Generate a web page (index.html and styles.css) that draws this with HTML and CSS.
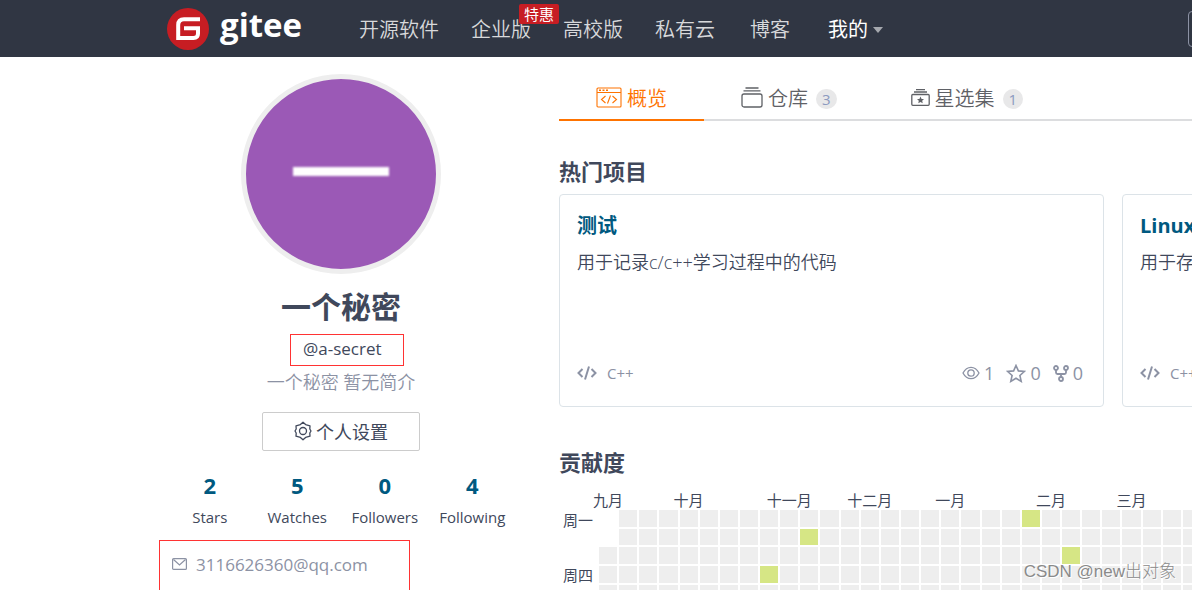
FILE: index.html
```html
<!DOCTYPE html>
<html lang="zh-CN">
<head>
    <meta charset="UTF-8">
    <meta name="viewport" content="width=device-width, initial-scale=1.0">
    <title>一个秘密 - Gitee</title>
    <link rel="stylesheet" href="styles.css">
</head>
<body>
    <header class="header">
        <a class="logo" href="#">
            <svg width="42" height="42" viewBox="0 0 42 42" aria-hidden="true">
                <circle cx="21" cy="21" r="21" fill="#c71d23"/>
                <path d="M33 11.200H17Q11.200 11.200 11.200 17V30H26.500Q31 30 31 25.500V20.200H17" fill="none" stroke="#fff" stroke-width="4"/>
            </svg>
            <span>gitee</span>
        </a>
        <nav class="nav">
            <a href="#">开源软件</a>
            <a href="#">企业版<span class="promo">特惠</span></a>
            <a href="#">高校版</a>
            <a href="#">私有云</a>
            <a class="short" href="#">博客</a>
            <a class="short mine" href="#">我的<span class="caret"></span></a>
        </nav>
        <input class="search" type="search" aria-label="搜索">
    </header>

    <main class="page">
        <aside class="profile">
            <div class="avatar"><span class="dash"></span></div>
            <h1>一个秘密</h1>
            <div class="username">@a-secret</div>
            <p class="bio">一个秘密 暂无简介</p>
            <button class="settings" type="button">
                <svg width="18" height="20" viewBox="0 0 18 20" fill="none" stroke="currentColor" stroke-width="1.300" stroke-linejoin="round" aria-hidden="true">
                    <path d="M9 1.200L11.600 3.600L16 4.800L15.800 8L17 10L15.800 12L16 15.200L11.600 16.400L9 18.800L6.400 16.400L2 15.200L2.200 12L1 10L2.200 8L2 4.800L6.400 3.600Z"/>
                    <circle cx="9" cy="10" r="3.500"/>
                </svg>
                个人设置
            </button>
            <div class="stats">
                <a href="#"><b>2</b>Stars</a>
                <a href="#"><b>5</b>Watches</a>
                <a href="#"><b>0</b>Followers</a>
                <a href="#"><b>4</b>Following</a>
            </div>
            <div class="contact">
                <svg width="15" height="12" viewBox="0 0 15 12" fill="none" stroke="currentColor" stroke-width="1.200" aria-hidden="true">
                    <rect x="0.600" y="0.600" width="13.800" height="10.800" rx="1"/>
                    <path d="M1.500 1.500L7.500 7L13.500 1.500"/>
                </svg>
                <a href="#">3116626360@qq.com</a>
            </div>
        </aside>

        <section class="content">
            <nav class="tabs">
                <a class="active" href="#">
                    <svg width="26" height="21" viewBox="0 0 26 21" fill="none" stroke="currentColor" aria-hidden="true">
                        <rect x="1" y="1" width="24" height="19" rx="1" stroke-width="1.100"/>
                        <path d="M1 5.500H25M9.500 9L5.500 12.500L9.500 16M16.500 9L20.500 12.500L16.500 16M14.500 8.500L11.500 16.500" stroke-width="1.100"/>
                        <path d="M3 3.300H5M6.500 3.300H8.500M10 3.300H12" stroke-width="1.400"/>
                    </svg>
                    概览
                </a>
                <a href="#">
                    <svg width="22" height="21" viewBox="0 0 22 21" fill="none" stroke="currentColor" stroke-width="1.300" aria-hidden="true">
                        <path d="M4.500 1H17.500M2.500 3.800H19.500"/>
                        <rect x="1" y="7" width="20" height="13" rx="2"/>
                    </svg>
                    仓库 <span class="count">3</span>
                </a>
                <a href="#">
                    <svg width="19" height="17" viewBox="0 0 19 17" fill="none" stroke="currentColor" stroke-width="1.300" aria-hidden="true">
                        <path d="M5 0.700H14M3 3H16"/>
                        <rect x="0.800" y="5.500" width="17.400" height="10.800" rx="1"/>
                        <path d="M9.500 7.500L10.600 9.900L13 10.100L11.200 11.700L11.700 14.200L9.500 12.900L7.300 14.200L7.800 11.700L6 10.100L8.400 9.900Z" fill="currentColor" stroke="none"/>
                    </svg>
                    星选集 <span class="count">1</span>
                </a>
            </nav>

            <h2>热门项目</h2>
            <div class="projects">
                <article class="card">
                    <h3><a href="#">测试</a></h3>
                    <p>用于记录c/c++学习过程中的代码</p>
                    <div class="meta">
                        <svg width="20" height="14" viewBox="0 0 20 14" fill="none" stroke="currentColor" stroke-width="2" aria-hidden="true">
                            <path d="M5.500 3L1.500 7L5.500 11M14.500 3L18.500 7L14.500 11M12 0.500L8 13.500"/>
                        </svg>
                        <span class="lang">C++</span>
                        <span class="figure">
                            <svg width="18" height="14" viewBox="0 0 18 14" fill="none" stroke="currentColor" stroke-width="1.300" aria-hidden="true">
                                <path d="M1 7Q4 1.300 9 1.300T17 7Q14 12.700 9 12.700T1 7Z"/>
                                <circle cx="9" cy="7" r="3.200"/>
                            </svg>
                            1
                        </span>
                        <span class="figure">
                            <svg width="20" height="19" viewBox="0 0 20 19" fill="none" stroke="currentColor" stroke-width="1.600" aria-hidden="true">
                                <path d="M10 1.500L12.400 6.900L18.300 7.500L13.900 11.500L15.200 17.400L10 14.300L4.800 17.400L6.100 11.500L1.700 7.500L7.600 6.900Z"/>
                            </svg>
                            0
                        </span>
                        <span class="figure">
                            <svg width="16" height="17" viewBox="0 0 16 17" fill="none" stroke="currentColor" stroke-width="1.800" aria-hidden="true">
                                <circle cx="3" cy="3" r="2"/>
                                <circle cx="13" cy="3" r="2"/>
                                <circle cx="8" cy="14" r="2"/>
                                <path d="M3 5V7.500Q3 9 4.500 9H11.500Q13 9 13 7.500V5M8 9V12"/>
                            </svg>
                            0
                        </span>
                    </div>
                </article>
                <article class="card">
                    <h3><a href="#">Linux</a></h3>
                    <p>用于存</p>
                    <div class="meta">
                        <svg width="20" height="14" viewBox="0 0 20 14" fill="none" stroke="currentColor" stroke-width="2" aria-hidden="true">
                            <path d="M5.500 3L1.500 7L5.500 11M14.500 3L18.500 7L14.500 11M12 0.500L8 13.500"/>
                        </svg>
                        <span class="lang">C++</span>
                    </div>
                </article>
            </div>

            <h2 class="calendar-title">贡献度</h2>
            <div class="calendar">
                <div class="months" id="months"></div>
                <div class="days">
                    <span>周一</span>
                    <span>周四</span>
                </div>
                <div class="weeks" id="weeks"></div>
            </div>
        </section>
    </main>
    <div class="watermark">CSDN @new出对象</div>

    <script>
        const WEEKS = 53;
        const FIRST_DAY = 2; // the first week starts on Wednesday
        const months = [
            { name: '九月', week: 0 },
            { name: '十月', week: 4 },
            { name: '十一月', week: 9 },
            { name: '十二月', week: 13 },
            { name: '一月', week: 17 },
            { name: '二月', week: 22 },
            { name: '三月', week: 26 }
        ];
        // week-day pairs that have contributions
        const active = ['8-3', '10-1', '21-0', '23-2'];

        months.forEach(month => {
            const label = document.createElement('span');
            label.textContent = month.name;
            label.style.gridColumn = month.week + 1;
            document.getElementById('months').appendChild(label);
        });

        const weeks = document.getElementById('weeks');
        for (let week = 0; week < WEEKS; week++) {
            for (let day = 0; day < 7; day++) {
                const box = document.createElement('i');
                if (week === 0 && day < FIRST_DAY) {
                    box.className = 'blank';
                } else if (active.includes(`${week}-${day}`)) {
                    box.className = 'some';
                }
                weeks.appendChild(box);
            }
        }
    </script>
</body>
</html>
```
FILE: styles.css
```css
* {
    box-sizing: border-box;
}
body {
    margin: 0;
    height: 100vh;
    position: relative;
    overflow: hidden;
    background-color: #fff;
    color: #40485b;
    font-family: "Open Sans", "Noto Sans CJK SC", sans-serif;
    font-size: 18px;
}
a {
    color: inherit;
    text-decoration: none;
}
svg {
    flex: none;
}
h1, h2, h3, p {
    margin: 0;
}

/* Header */
.header {
    display: flex;
    align-items: center;
    height: 57px;
    padding-left: 167px;
    background-color: #303643;
    white-space: nowrap;
}
.logo {
    display: flex;
    align-items: center;
    gap: 11px;
    color: #fff;
    font-size: 33px;
    font-weight: bold;
    line-height: 42px;
}
.logo span {
    padding-bottom: 8px;
}
.nav {
    display: flex;
    gap: 32px;
    margin-left: 57px;
    padding-top: 2px;
    color: #d8d9db;
    font-size: 20px;
    font-weight: 350;
    line-height: 30px;
}
.nav a {
    position: relative;
}
.nav .short {
    padding: 0 3px;
}
.nav .mine {
    display: flex;
    align-items: center;
    gap: 5px;
    color: #fff;
    font-weight: normal;
}
.caret {
    border: 5px solid transparent;
    border-top: 6px solid #a5a8ae;
    border-bottom: 0;
}
.promo {
    position: absolute;
    left: 48px;
    top: -11px;
    padding: 0 5px;
    border-radius: 2px;
    background-color: #c71d23;
    color: #fff;
    font-size: 15px;
    font-weight: normal;
    line-height: 20px;
}
.search {
    flex: none;
    width: 260px;
    height: 36px;
    margin-left: 302px;
    border: 1px solid #8c92a4;
    border-radius: 4px;
    background-color: transparent;
}

.page {
    display: flex;
    gap: 36px;
    padding-left: 159px;
}

/* Profile */
.profile {
    flex: none;
    width: 364px;
    padding-top: 17px;
    display: flex;
    flex-direction: column;
    align-items: center;
}
.avatar {
    display: flex;
    align-items: center;
    justify-content: center;
    width: 200px;
    height: 200px;
    padding-bottom: 5px;
    border: 5px solid #eee;
    border-radius: 50%;
    background-color: #9b59b6;
}
.dash {
    width: 96px;
    height: 9px;
    background-color: #fff;
    filter: blur(1px);
}
h1 {
    margin-top: 12px;
    font-size: 30px;
    line-height: 42px;
}
.username {
    width: 114px;
    margin: 6px 0 0 12px;
    padding-left: 12px;
    border: 1px solid #f33;
    font-size: 17px;
    line-height: 28px;
    padding-bottom: 2px;
}
.bio {
    margin-top: 3px;
    color: #8c92a4;
    font-weight: 350;
    line-height: 26px;
}
.settings {
    display: flex;
    align-items: center;
    justify-content: center;
    gap: 4px;
    height: 39px;
    margin-top: 17px;
    padding: 0 31px 2px;
    border: 1px solid #ccc;
    border-radius: 2px;
    background-color: #fff;
    color: #40485b;
    font-family: inherit;
    font-size: 18px;
}
.stats {
    display: grid;
    grid-template-columns: repeat(4, 1fr);
    width: 350px;
    margin-top: 18px;
    text-align: center;
    font-size: 15px;
    line-height: 32px;
}
.stats b {
    display: block;
    color: #005980;
    font-size: 22px;
}
.contact {
    display: flex;
    align-items: center;
    align-self: flex-start;
    gap: 9px;
    width: 251px;
    height: 80px;
    margin-top: 7px;
    padding: 0 12px 32px;
    border: 1px solid #f33;
    color: #8c92a4;
    font-size: 17px;
}

/* Content */
.content {
    flex: 1;
    min-width: 1108px;
}
.tabs {
    display: flex;
    height: 64px;
    border-bottom: 2px solid #dcdddf;
    color: #5f6166;
    font-size: 20px;
    font-weight: 350;
}
.tabs a {
    display: flex;
    align-items: center;
    gap: 5px;
    height: 64px;
    padding: 18px 37px 0;
    border-bottom: 2px solid transparent;
}
.tabs .active {
    border-color: #fe7300;
    color: #fe7300;
}
.count {
    margin: 3px 0 0 3px;
    padding: 0 6px;
    border-radius: 10px;
    background-color: #e8e8e9;
    color: #8c9ac0;
    font-size: 15px;
    font-weight: normal;
    line-height: 20px;
}
h2 {
    margin: 34px 0 7px;
    font-size: 22px;
    line-height: 32px;
}
.projects {
    display: flex;
    gap: 18px;
}
.card {
    flex: 1;
    display: flex;
    flex-direction: column;
    height: 213px;
    padding: 16px 20px 18px 17px;
    border: 1px solid #dce3e8;
    border-radius: 4px;
}
.card h3 {
    color: #005980;
    font-size: 20px;
    line-height: 30px;
}
.card p {
    margin-top: 8px;
    font-weight: 350;
    line-height: 26px;
}
.meta {
    display: flex;
    align-items: center;
    gap: 12px;
    margin-top: auto;
    color: #8c92a4;
    line-height: 30px;
}
.lang {
    flex: 1;
    margin-left: -2px;
    font-size: 15px;
}
.figure {
    display: flex;
    align-items: center;
    gap: 4px;
}

/* Contribution calendar */
.calendar-title {
    margin: 39px 0 12px;
}
.calendar {
    display: grid;
    grid-template-columns: 40px 1fr;
    padding-right: 3px;
    font-size: 15px;
    line-height: 20px;
}
.months, .weeks {
    display: grid;
    grid-template-columns: repeat(53, minmax(0, 1fr));
    gap: 2px;
}
.months {
    grid-column: 2;
}
.months span {
    justify-self: center;
    white-space: nowrap;
}
.days, .weeks {
    height: 129px;
}
.days {
    display: flex;
    flex-direction: column;
    gap: 35px;
    padding-left: 4px;
}
.weeks {
    grid-auto-flow: column;
    grid-template-rows: repeat(7, 1fr);
}
.weeks i {
    background-color: #eee;
}
.weeks .some {
    background-color: #d6e685;
}
.weeks .blank {
    background-color: transparent;
}

.watermark {
    position: absolute;
    right: 16px;
    bottom: 6px;
    color: #8a8a8a;
    font-family: "Liberation Sans", "Noto Sans CJK SC", sans-serif;
    font-size: 17px;
    font-weight: 300;
    line-height: 24px;
    text-shadow: 1px 1px 0 #fff;
}
```
